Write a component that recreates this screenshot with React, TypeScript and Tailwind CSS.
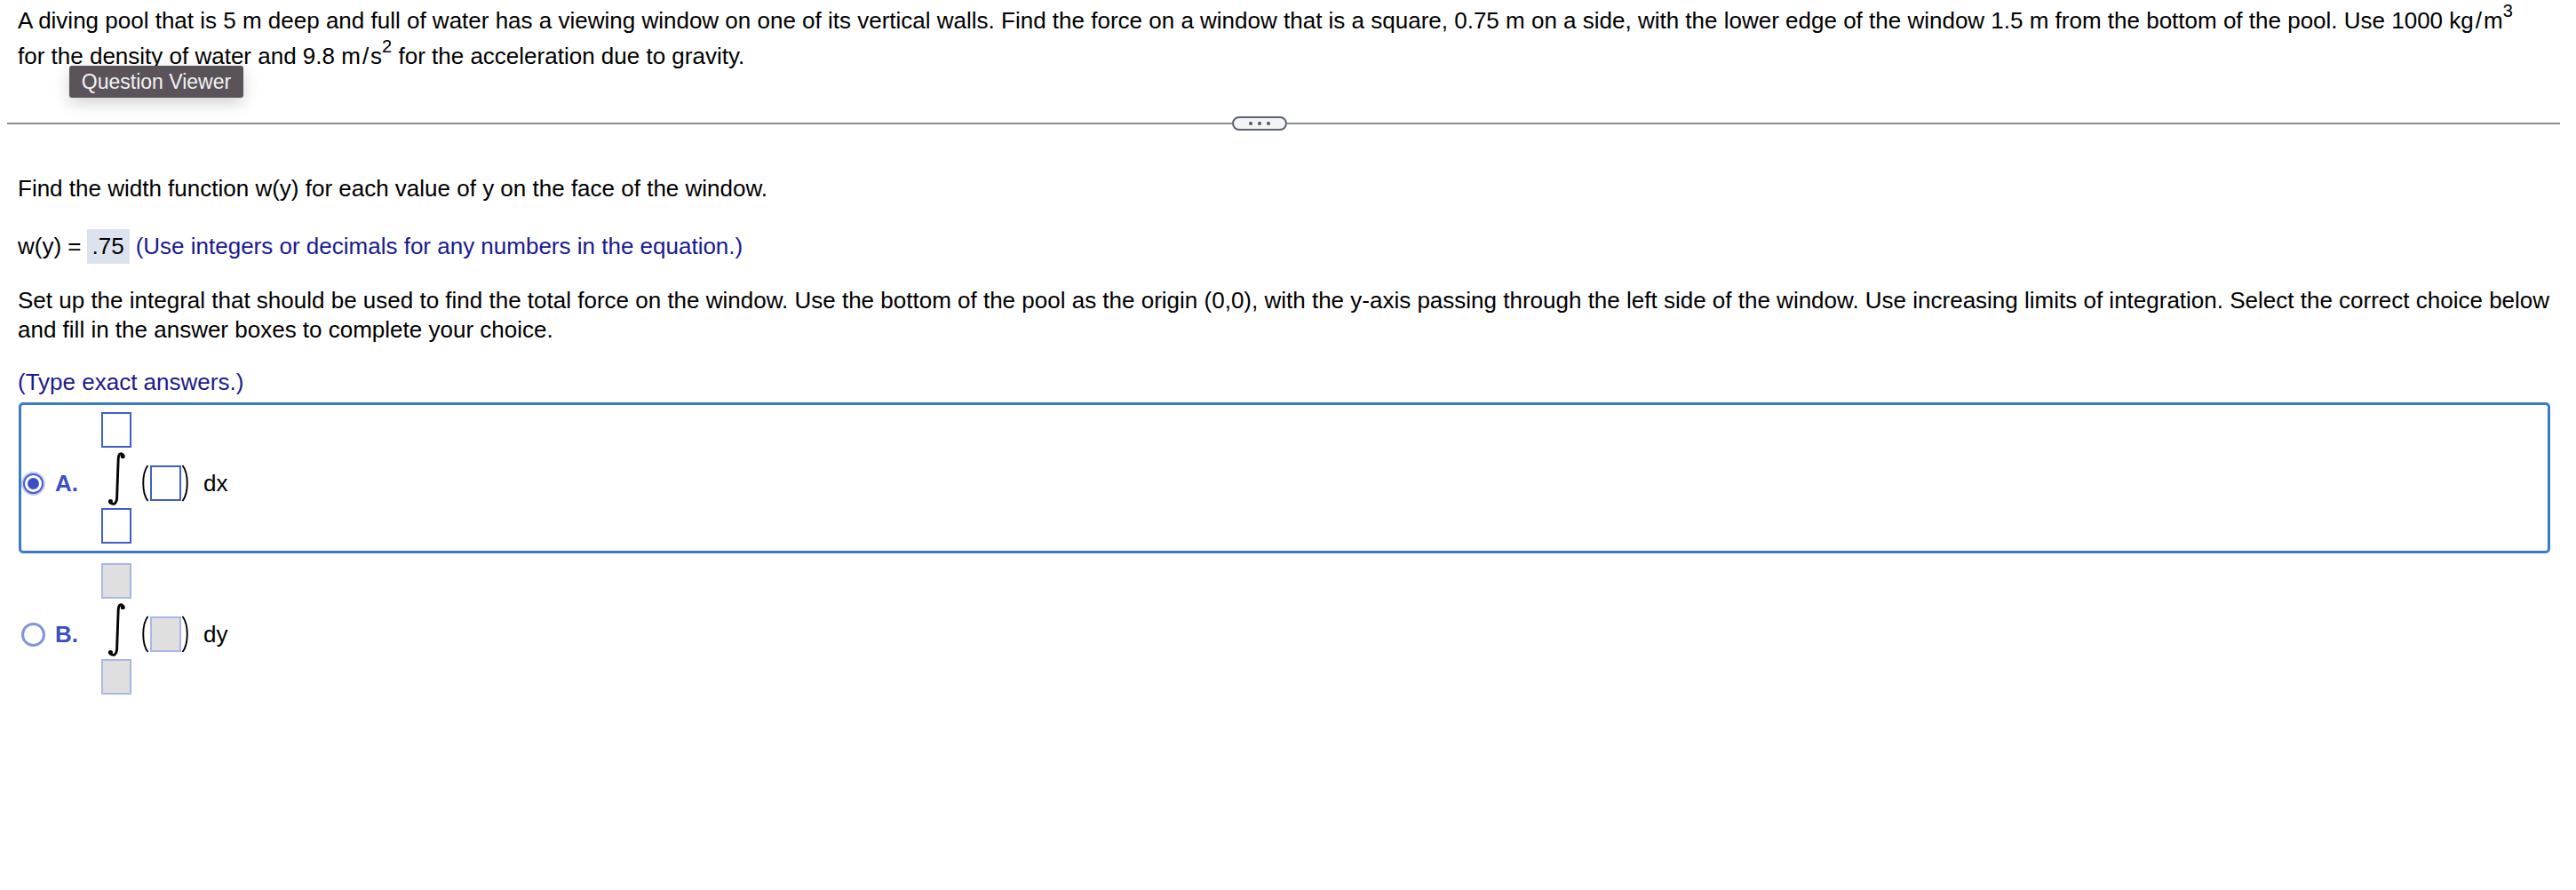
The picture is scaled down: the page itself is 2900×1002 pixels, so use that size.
import React from "react";

function IntegralSign() {
  return (
    <svg width="22" height="60" viewBox="0 0 22 60" className="block">
      <path
        d="M18.5 3.2 C16.5 0.8 13.6 1.2 13.2 7 L11.6 52 C11.2 58.5 7.5 59.6 4.2 57.2"
        fill="none"
        stroke="#000"
        strokeWidth="2.9"
        strokeLinecap="round"
      />
      <circle cx="18.2" cy="4.8" r="2.5" fill="#000" />
      <circle cx="4.4" cy="55.4" r="2.5" fill="#000" />
    </svg>
  );
}

function LeftParen() {
  return (
    <svg width="10" height="42" viewBox="0 0 10 42" className="block">
      <path d="M8.5 1 C1.5 10 1.5 32 8.5 41" fill="none" stroke="#000" strokeWidth="1.9" />
    </svg>
  );
}

function RightParen() {
  return (
    <svg width="10" height="42" viewBox="0 0 10 42" className="block">
      <path d="M1.5 1 C8.5 10 8.5 32 1.5 41" fill="none" stroke="#000" strokeWidth="1.9" />
    </svg>
  );
}

function AnswerBox({ active, w = "w-[34px]" }: { active: boolean; w?: string }) {
  return (
    <span
      className={
        active
          ? `block ${w} h-[40px] border-2 border-[#3d5fc7] bg-white`
          : `block ${w} h-[40px] border-2 border-[#a9b7e6] bg-[#dfdfdf]`
      }
    />
  );
}

function Choice({
  letter,
  variable,
  selected,
}: {
  letter: string;
  variable: string;
  selected: boolean;
}) {
  return (
    <div
      className={
        selected
          ? "border-[3px] border-[#3a7bc8] rounded-[5px] py-[8px] flex items-center"
          : "border-[3px] border-transparent rounded-[5px] py-[8px] flex items-center"
      }
    >
      <div className="flex items-center mt-[12px]">
        {selected ? (
          <span className="w-[27px] h-[27px] rounded-full bg-[#c8d0f2] flex items-center justify-center">
            <span className="w-[23px] h-[23px] rounded-full border-2 border-[#4a5fcf] bg-white flex items-center justify-center">
              <span className="w-[13px] h-[13px] rounded-full bg-[#3b4fc4]" />
            </span>
          </span>
        ) : (
          <span className="w-[27px] h-[27px] rounded-full border-[3px] border-[#8294dd] bg-white" />
        )}
        <span className="ml-[11px] w-[52px] text-[26px] font-bold text-[#3c4fc2] leading-[30px]">
          {letter}.
        </span>
      </div>
      <div className="flex flex-col items-center w-[34px]">
        <AnswerBox active={selected} />
        <div className="mt-[5px] h-[60px] flex justify-center">
          <IntegralSign />
        </div>
        <div className="mt-[3px]">
          <AnswerBox active={selected} />
        </div>
      </div>
      <div className="flex items-center mt-[12px] ml-[10px]">
        <LeftParen />
        <span className="ml-[1px]">
          <AnswerBox active={selected} w="w-[35px]" />
        </span>
        <RightParen />
        <span className="ml-[15px] text-[26px] leading-[30px] text-black">{variable}</span>
      </div>
    </div>
  );
}

export default function App() {
  return (
    <div
      className="relative w-[2900px] h-[1002px] bg-white text-black"
      style={{ fontFamily: '"Liberation Sans", Arial, sans-serif' }}
    >
      <div className="px-[20px] pt-[6px] text-[26px] leading-[34px]">
        <p>
          A diving pool that is 5 m deep and full of water has a viewing window on one of its
          vertical walls. Find the force on a window that is a square, 0.75 m on a side, with the
          lower edge of the window 1.5 m from the bottom of the pool. Use 1000 kg
          <span className="mx-[2px]">/</span>m<sup className="text-[20px] top-[-0.65em]">3</sup>
        </p>
        <p className="mt-[6px]">
          for the density of water and 9.8 m<span className="mx-[2px]">/</span>s
          <sup className="text-[20px] top-[-0.65em]">2</sup> for the acceleration due to gravity.
        </p>
      </div>

      <div className="absolute left-[78px] top-[74px] w-[196px] h-[36px] rounded-[3px] bg-[#5b535a] text-[#f3f3f3] text-[23px] flex items-center justify-center shadow-[0_6px_18px_rgba(0,0,0,0.18)]">
        Question Viewer
      </div>

      <div className="mt-[51px] ml-[8px] mr-[18px] flex items-center h-[16px]">
        <div className="w-[1379px] h-[2px] bg-[#8a8f9b]" />
        <div className="w-[62px] h-[16px] rounded-full border-2 border-[#5b6270] bg-[#f3f4f6] flex items-center justify-center gap-[6px]">
          <span className="w-[4px] h-[4px] rounded-full bg-[#4b5563]" />
          <span className="w-[4px] h-[4px] rounded-full bg-[#4b5563]" />
          <span className="w-[4px] h-[4px] rounded-full bg-[#4b5563]" />
        </div>
        <div className="flex-1 h-[2px] bg-[#8a8f9b]" />
      </div>

      <div className="px-[20px] text-[26px] leading-[33px]">
        <p className="mt-[49px]">
          Find the width function w(y) for each value of y on the face of the window.
        </p>
        <div className="mt-[29px] leading-[39px] flex items-center">
          <span>w(y) =</span>
          <span className="ml-[6px] inline-block h-[39px] px-[6px] bg-[#dce3ef]">.75</span>
          <span className="ml-[7px] text-[#1a1a8e]">
            (Use integers or decimals for any numbers in the equation.)
          </span>
        </div>
        <p className="mt-[25px]">
          Set up the integral that should be used to find the total force on the window. Use the
          bottom of the pool as the origin (0,0), with the y-axis passing through the left side of
          the window. Use increasing limits of integration. Select the correct choice below
          <br />
          and fill in the answer boxes to complete your choice.
        </p>
        <p className="mt-[26px] text-[#1a1a8e]">(Type exact answers.)</p>
      </div>

      <div className="mt-[6px] ml-[21px] w-[2850px]">
        <Choice letter="A" variable="dx" selected={true} />
        <Choice letter="B" variable="dy" selected={false} />
      </div>
    </div>
  );
}
